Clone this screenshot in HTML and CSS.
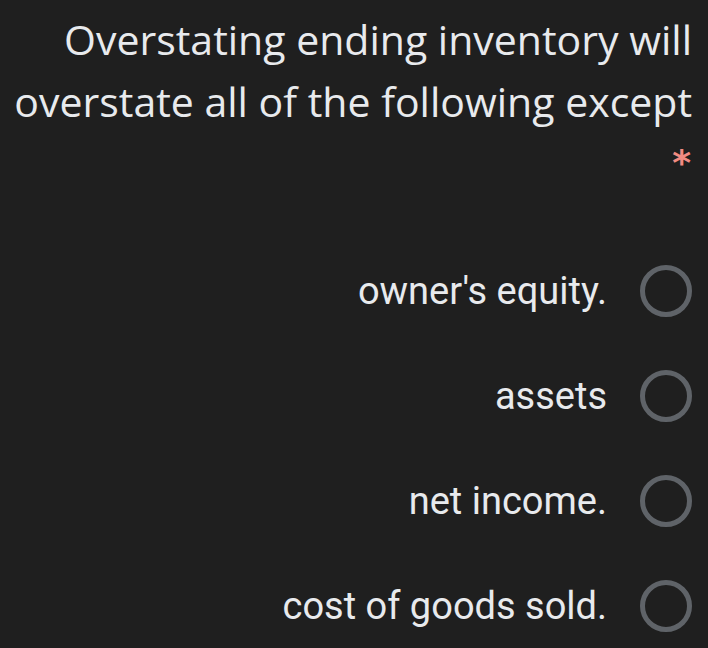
FILE: index.html
```html
<!DOCTYPE html>
<html>
<head>
<meta charset="utf-8">
<link rel="stylesheet" href="styles.css">
</head>
<body>
<div class="page">
  <div class="title">Overstating ending inventory will overstate all of the following except <span class="req">*</span></div>
  <div class="options">
    <div class="opt"><span class="label">owner's equity.</span><span class="radio"></span></div>
    <div class="opt"><span class="label">assets</span><span class="radio"></span></div>
    <div class="opt"><span class="label">net income.</span><span class="radio"></span></div>
    <div class="opt"><span class="label">cost of goods sold.</span><span class="radio"></span></div>
  </div>
</div>
</body>
</html>
```
FILE: styles.css
```css
html, body {
  margin: 0;
  padding: 0;
  background: #1f1f1f;
}
.page {
  width: 708px;
  height: 648px;
  box-sizing: border-box;
  padding: 8px 16px 0 4px;
  color: #e8eaed;
  font-family: "Open Sans", Roboto, sans-serif;
}
.title {
  text-align: right;
  font-size: 41px;
  line-height: 62px;
}
.req {
  display: block;
  color: #f28b82;
  font-family: "DejaVu Sans", sans-serif;
  font-size: 36px;
  font-weight: 700;
  padding-right: 1px;
}
.options {
  margin-top: 44px;
  display: flex;
  flex-direction: column;
}
.opt {
  height: 105px;
  display: flex;
  align-items: center;
  justify-content: flex-end;
  gap: 33px;
}
.label {
  font-family: Roboto, sans-serif;
  font-size: 38px;
  color: #e8eaed;
}
.radio {
  width: 52px;
  height: 52px;
  box-sizing: border-box;
  border: 5px solid #5f6368;
  border-radius: 50%;
}
```
